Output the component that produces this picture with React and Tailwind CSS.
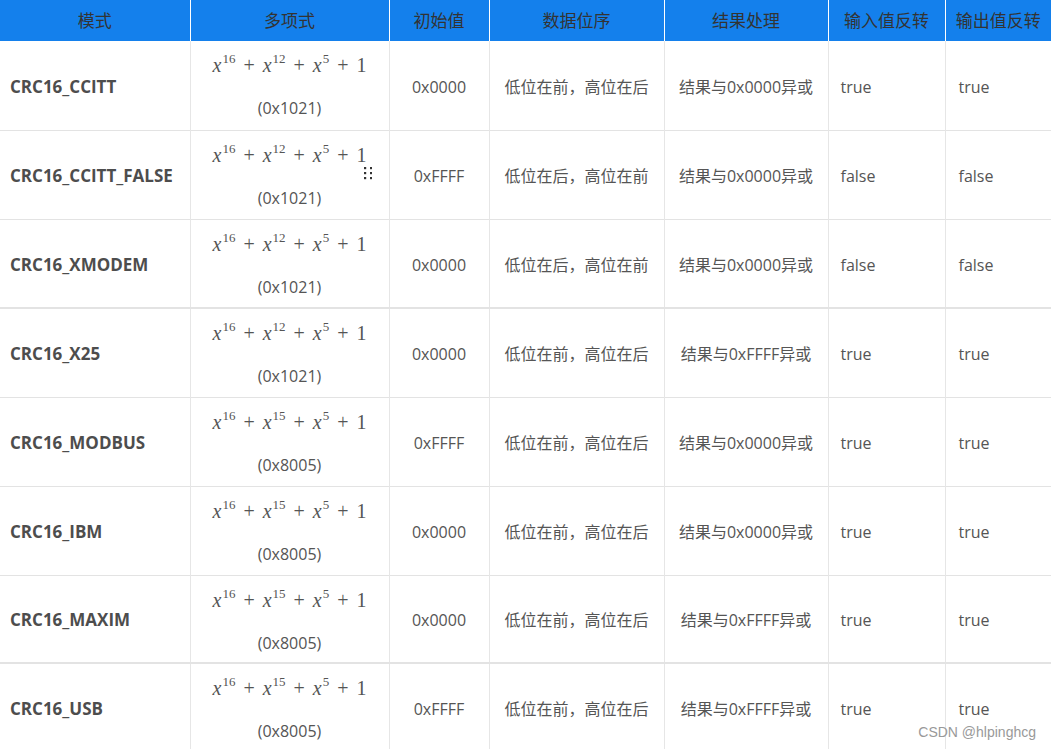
import React from "react";

const rows = [
  { name: "CRC16_CCITT", exp: "12", poly: "0x1021", init: "0x0000", order: "低位在前，高位在后", xor: "结果与0x0000异或", rin: "true", rout: "true" },
  { name: "CRC16_CCITT_FALSE", exp: "12", poly: "0x1021", init: "0xFFFF", order: "低位在后，高位在前", xor: "结果与0x0000异或", rin: "false", rout: "false", handle: true },
  { name: "CRC16_XMODEM", exp: "12", poly: "0x1021", init: "0x0000", order: "低位在后，高位在前", xor: "结果与0x0000异或", rin: "false", rout: "false", thick: true },
  { name: "CRC16_X25", exp: "12", poly: "0x1021", init: "0x0000", order: "低位在前，高位在后", xor: "结果与0xFFFF异或", rin: "true", rout: "true" },
  { name: "CRC16_MODBUS", exp: "15", poly: "0x8005", init: "0xFFFF", order: "低位在前，高位在后", xor: "结果与0x0000异或", rin: "true", rout: "true" },
  { name: "CRC16_IBM", exp: "15", poly: "0x8005", init: "0x0000", order: "低位在前，高位在后", xor: "结果与0x0000异或", rin: "true", rout: "true" },
  { name: "CRC16_MAXIM", exp: "15", poly: "0x8005", init: "0x0000", order: "低位在前，高位在后", xor: "结果与0xFFFF异或", rin: "true", rout: "true", thick: true, short: true },
  { name: "CRC16_USB", exp: "15", poly: "0x8005", init: "0xFFFF", order: "低位在前，高位在后", xor: "结果与0xFFFF异或", rin: "true", rout: "true" },
];

const headers = ["模式", "多项式", "初始值", "数据位序", "结果处理", "输入值反转", "输出值反转"];
const widths = ["w-[190px]", "w-[199px]", "w-[100px]", "w-[175px]", "w-[164px]", "w-[117px]", "w-[106px]"];

function X({ p }) {
  return (
    <span>
      <span className="italic">x</span>
      <sup className="text-[13px] relative -top-[9px] ml-[1px]">{p}</sup>
    </span>
  );
}

function Formula({ exp }) {
  return (
    <div className="text-[20px] text-[#555] leading-none pt-[4px]" style={{ fontFamily: '"Liberation Serif", "DejaVu Serif", serif' }}>
      <X p="16" /><span className="mx-[8px]">+</span><X p={exp} /><span className="mx-[8px]">+</span><X p="5" /><span className="mx-[8px]">+</span>1
    </div>
  );
}

function DragHandle() {
  return (
    <svg width="8" height="14" viewBox="0 0 8 14" className="absolute left-[364px] top-[166px]">
      {[1, 7].map(x => [2, 7, 12].map(y => <rect key={x + "-" + y} x={x - 1} y={y - 1} width="2.2" height="2.2" fill="#333" />))}
    </svg>
  );
}

export default function App() {
  return (
    <div className="relative w-[1051px] h-[749px] overflow-hidden bg-white" style={{ fontFamily: '"Open Sans", "Noto Sans CJK SC", sans-serif' }}>
      <table className="table-fixed border-collapse w-[1051px]">
        <thead>
          <tr className="bg-[#1480ec] h-[41px]">
            {headers.map((h, i) => (
              <th key={h} className={`${widths[i]} p-0 font-normal text-[17px] text-[#333] text-center border-l border-white first:border-l-0`}>
                {h}
              </th>
            ))}
          </tr>
        </thead>
        <tbody className="text-[16px] text-[#555]">
          {rows.map(r => (
            <tr key={r.name} className={`${r.short ? "h-[88px]" : "h-[89px]"} ${r.thick ? "border-b-2" : "border-b"} border-[#e3e3e3]`}>
              <td className="pl-[10px] pt-[2px] font-bold text-[#4d4d4d] text-[17px]">{r.name}</td>
              <td className="border-l border-[#e6e6e6] text-center align-top">
                <div className="flex flex-col items-center pt-[10px] gap-[25px]">
                  <Formula exp={r.exp} />
                  <div className="leading-none">({r.poly})</div>
                </div>
              </td>
              <td className="border-l border-[#e6e6e6] pt-[3px] text-center">{r.init}</td>
              <td className="border-l border-[#e6e6e6] pt-[3px] text-center">{r.order}</td>
              <td className="border-l border-[#e6e6e6] pt-[3px] text-center">{r.xor}</td>
              <td className="border-l border-[#e6e6e6] pt-[3px] pl-[12px]">{r.rin}</td>
              <td className="border-l border-[#e6e6e6] pt-[3px] pl-[13px]">{r.rout}</td>
            </tr>
          ))}
        </tbody>
      </table>
      <DragHandle />
      <div className="absolute right-[15px] top-[722px] text-[14px] text-[#999]" style={{ fontFamily: '"Liberation Sans", sans-serif' }}>
        CSDN @hlpinghcg
      </div>
    </div>
  );
}
